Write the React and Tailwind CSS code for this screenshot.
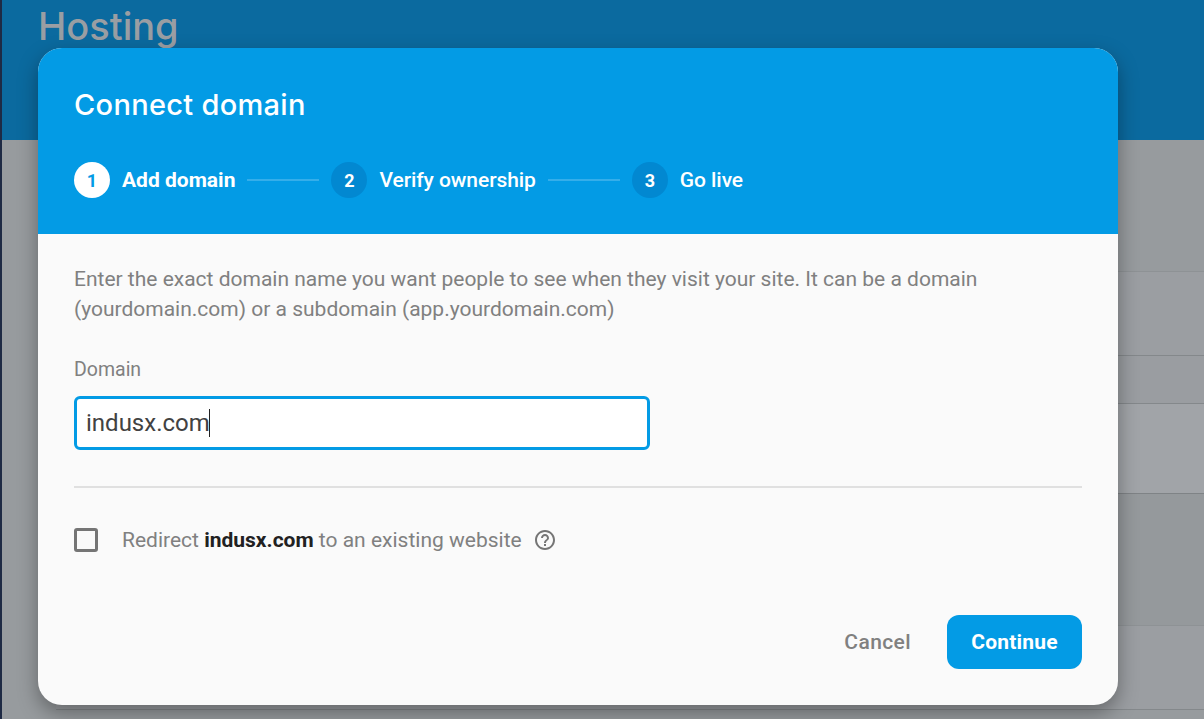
import React from "react";

function Step({ n, label, active }) {
  return (
    <div className="flex items-center gap-3">
      <div className={`w-9 h-9 rounded-full flex items-center justify-center text-[18px] font-bold ${active ? "bg-white text-[#039be5]" : "bg-[#0288d1] text-white"}`}>{n}</div>
      <span className={`text-[21px] leading-6 text-white ${active ? "font-bold" : "font-medium tracking-[-0.07px]"}`}>{label}</span>
    </div>
  );
}

function Connector() {
  return <div className="w-[72px] h-[2px] mx-3 bg-[#35aeea]" />;
}

function Row({ h, bg, line }) {
  return <div className={`${h} ${bg} border-b ${line}`} />;
}

export default function App() {
  return (
    <div className="relative w-[1204px] h-[719px] overflow-hidden bg-[#979b9e] font-['Roboto',sans-serif]">
      <div className="flex h-full">
        <div className="w-[2px] bg-[#1e2a44]" />
        <div className="flex-1 flex flex-col">
          <div className="h-[140px] shrink-0 bg-[#0b6a9f] pl-[36px] pt-[2px]">
            <div className="text-[38px] leading-[48px] font-medium text-[#9a9ea3] font-['Inter',sans-serif]">Hosting</div>
          </div>
          <div className="flex-1 pl-[54px] flex flex-col">
            <Row h="h-[132px]" bg="bg-[#979b9e]" line="border-[#8e9295]" />
            <Row h="h-[84px]" bg="bg-[#9b9ea2]" line="border-[#84888b]" />
            <Row h="h-[48px]" bg="bg-[#9a9da1]" line="border-[#84888b]" />
            <Row h="h-[90px]" bg="bg-[#a1a4a8]" line="border-[#7f8386]" />
            <Row h="h-[132px]" bg="bg-[#95999c]" line="border-[#8e9295]" />
            <Row h="h-[84px]" bg="bg-[#9b9ea2]" line="border-[#84888b]" />
          </div>
        </div>
      </div>

      <div className="absolute left-[38px] top-[48px] w-[1080px] h-[657px] rounded-[24px] overflow-hidden bg-[#fafafa] shadow-[0_8px_20px_rgba(0,0,0,0.35)] flex flex-col">
        <div className="h-[186px] shrink-0 bg-[#039be5] px-9 pt-[39px]">
          <h2 className="text-[29px] leading-9 font-medium tracking-[0.3px] text-white font-['Inter',sans-serif]">Connect domain</h2>
          <div className="flex items-center mt-[39px]">
            <Step n="1" label="Add domain" active />
            <Connector />
            <Step n="2" label="Verify ownership" />
            <Connector />
            <Step n="3" label="Go live" />
          </div>
        </div>
        <div className="flex-1 px-9 pt-[30px] flex flex-col">
          <p className="text-[21px] leading-[30px] text-[#808080]">
            Enter the exact domain name you want people to see when they visit your site. It can be a domain<br />
            (yourdomain.com) or a subdomain (app.yourdomain.com)
          </p>
          <label className="mt-[34px] text-[19.5px] leading-6 text-[#808080]">Domain</label>
          <div className="mt-[14px] w-[576px] h-[54px] rounded-[6px] border-[3px] border-[#039be5] bg-white flex items-center pl-[9px]">
            <span className="text-[24px] text-[#424242] leading-8">indusx.com</span>
            <span className="w-px h-7 bg-[#212121] -ml-px" />
          </div>
          <div className="mt-[36px] h-[2px] bg-[#e0e0e0]" />
          <div className="mt-[38px] flex items-center">
            <div className="w-6 h-6 rounded-[3px] border-[3px] border-[#757575]" />
            <span className="ml-[24px] text-[21px] text-[#808080] leading-7">Redirect <b className="font-bold text-[#212121]">indusx.com</b> to an existing website</span>
            <svg className="ml-[11px]" width="24" height="24" viewBox="0 0 24 24" fill="#757575">
              <path d="M11 18h2v-2h-2v2zm1-16C6.48 2 2 6.48 2 12s4.480 10 10 10 10-4.480 10-10S17.520 2 12 2zm0 18c-4.410 0-8-3.590-8-8s3.590-8 8-8 8 3.590 8 8-3.590 8-8 8zm0-14c-2.210 0-4 1.790-4 4h2c0-1.100.9-2 2-2s2 .9 2 2c0 2-3 1.750-3 5h2c0-2.250 3-2.500 3-5 0-2.210-1.790-4-4-4z" />
            </svg>
          </div>
          <div className="mt-[61px] flex items-center justify-end">
            <span className="pt-px text-[21px] font-medium text-[#808080] mr-[36px] tracking-[0.4px]">Cancel</span>
            <button className="pt-px w-[135px] h-[54px] rounded-[12px] bg-[#039be5] text-white text-[21px] font-bold tracking-[0.2px]">Continue</button>
          </div>
        </div>
      </div>
    </div>
  );
}
